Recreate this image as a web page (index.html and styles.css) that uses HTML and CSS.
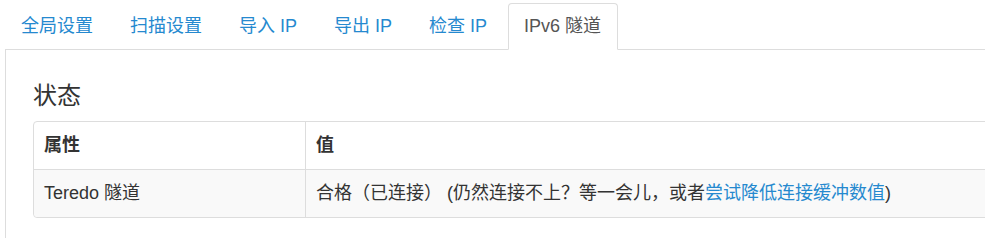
FILE: index.html
```html
<!DOCTYPE html>
<html lang="zh-CN">
<head>
<meta charset="utf-8">
<title>IPv6 隧道</title>
<link rel="stylesheet" href="styles.css">
</head>
<body>
<div class="page">
  <ul class="tabs">
    <li><a class="tab" href="#">全局设置</a></li>
    <li><a class="tab" href="#">扫描设置</a></li>
    <li><a class="tab" href="#">导入 IP</a></li>
    <li><a class="tab" href="#">导出 IP</a></li>
    <li><a class="tab" href="#">检查 IP</a></li>
    <li><a class="tab active" href="#">IPv6 隧道</a></li>
  </ul>
  <div class="panel">
    <h3 class="title">状态</h3>
    <table class="status-table">
      <thead>
        <tr><th class="col-key">属性</th><th>值</th></tr>
      </thead>
      <tbody>
        <tr><td>Teredo 隧道</td><td>合格（已连接） (仍然连接不上？等一会儿，或者<a class="link" href="#">尝试降低连接缓冲数值</a>)</td></tr>
      </tbody>
    </table>
  </div>
</div>
</body>
</html>
```
FILE: styles.css
```css
html, body {
  margin: 0;
  padding: 0;
  background: #fff;
  overflow: hidden;
}
body {
  font-family: "Liberation Sans", "Noto Sans CJK SC", sans-serif;
  font-size: 18px;
  color: #333;
}
.page {
  width: 1150px;
  padding-left: 5px;
}
.tabs {
  list-style: none;
  margin: 3px 0 0 0;
  padding: 0;
  display: flex;
  border-bottom: 1px solid #ddd;
}
.tabs li {
  margin-bottom: -1px;
  margin-right: 5px;
}
.tab {
  display: block;
  padding: 10px 15px;
  line-height: 25px;
  border: 1px solid transparent;
  border-radius: 4px 4px 0 0;
  color: #2589cf;
  text-decoration: none;
}
.tab.active {
  color: #555;
  background: #fff;
  border-color: #ddd #ddd transparent;
  padding: 10px 16px 10px 15px;
}
.panel {
  border-left: 1px solid #ddd;
  padding: 33px 27px 30px;
}
.title {
  margin: 0 0 12px;
  font-size: 24px;
  font-weight: 400;
  line-height: 26px;
  color: #333;
}
.status-table {
  width: 100%;
  border: 1px solid #ddd;
  border-radius: 4px;
  border-collapse: separate;
  border-spacing: 0;
}
.status-table th,
.status-table td {
  text-align: left;
  padding: 10px 10px;
  line-height: 27px;
  border-left: 1px solid #ddd;
}
.status-table th:first-child,
.status-table td:first-child {
  border-left: none;
}
.status-table th {
  font-weight: bold;
}
.status-table td {
  border-top: 1px solid #ddd;
  background: #f9f9f9;
}
.status-table tbody tr:last-child td:first-child {
  border-bottom-left-radius: 4px;
}
.col-key {
  width: 251px;
}
.link {
  color: #2589cf;
  text-decoration: none;
}
```
